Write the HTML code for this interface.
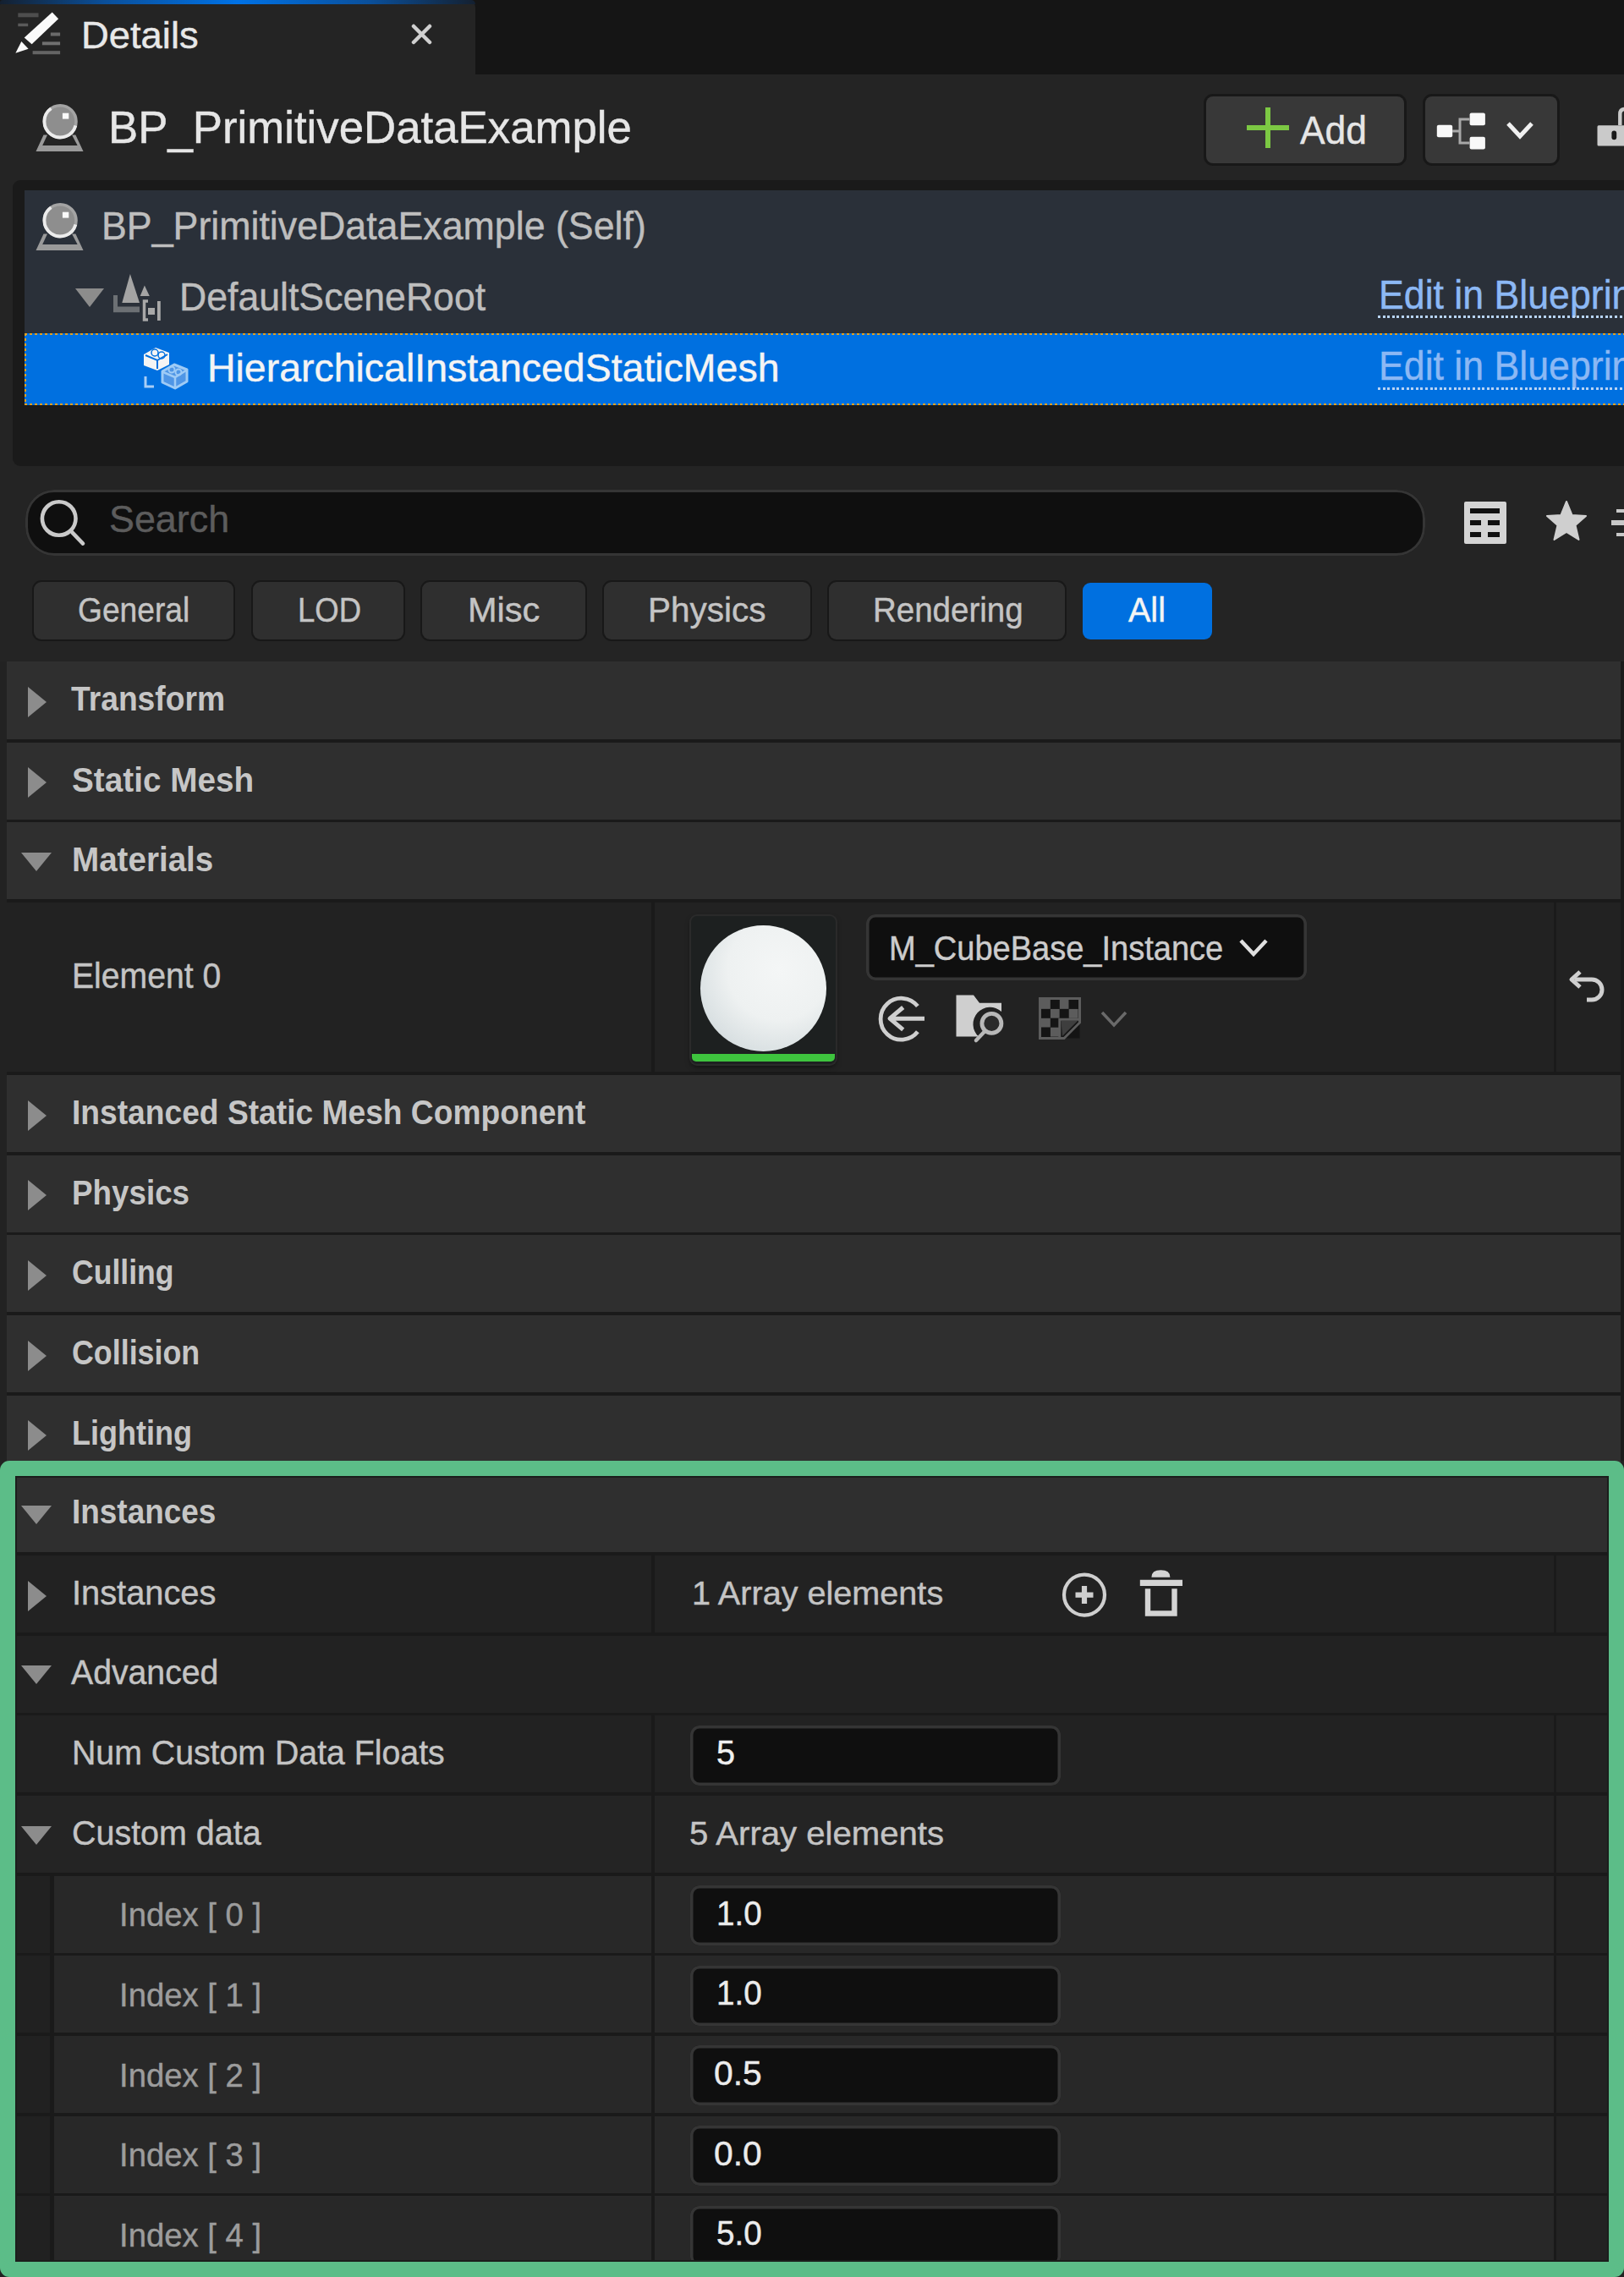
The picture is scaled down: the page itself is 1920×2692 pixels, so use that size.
<!DOCTYPE html>
<html><head><meta charset="utf-8"><style>
html,body{margin:0;padding:0;}
body{width:1920px;height:2692px;position:relative;overflow:hidden;background:#242424;font-family:"Liberation Sans",sans-serif;}
.t{position:absolute;white-space:pre;transform-origin:0 0;font-family:"Liberation Sans",sans-serif;-webkit-text-stroke:0.45px currentColor;}
</style></head><body>
<div style="position:absolute;left:0.00px;top:0.00px;width:1920.00px;height:88.00px;background:#151515;"></div>
<div style="position:absolute;left:0.00px;top:0.00px;width:561.50px;height:88.00px;background:#242424;border-top-right-radius:9px;border-top-left-radius:6px;"></div>
<div style="position:absolute;left:0.00px;top:0.00px;width:561.50px;height:4.50px;background:linear-gradient(90deg,#142030 0%,#0a4f9a 22%,#0072e6 50%,#0a4f9a 78%,#142030 100%);border-top-right-radius:9px;border-top-left-radius:6px;"></div>
<div class="t" style="left:95.80px;top:19.81px;font-size:44.93px;line-height:44.93px;color:#e8e8e8;transform:scaleX(1.0097);">Details</div>
<svg style="position:absolute;left:17.00px;top:13.00px" width="60.00" height="56.00" viewBox="0 0 60 56"><rect x="4.3" y="2.4" width="24.2" height="4.9" fill="#4e4e4e"/><rect x="4.3" y="14.7" width="11.9" height="3.5" fill="#5a5a5a"/>
<rect x="42.8" y="25.5" width="11.3" height="4" fill="#6a6a6a"/><rect x="32.9" y="36.4" width="21.2" height="3.9" fill="#707070"/><rect x="21.6" y="47.2" width="32.5" height="4" fill="#646464"/>
<path d="M44.7 1.4 L52.1 9.3 L20.6 39.3 L11.7 31.5 Z" fill="#fafafa"/><path d="M1.4 49.7 L8.3 35.9 L16.6 44.8 Z" fill="#fafafa"/></svg>
<svg style="position:absolute;left:486.00px;top:28.00px" width="25.00" height="25.00" viewBox="0 0 25 25"><path d="M3 3 L22 22 M22 3 L3 22" stroke="#d0d0d0" stroke-width="4.5" stroke-linecap="round"/></svg>
<div style="position:absolute;left:0.00px;top:88.00px;width:1920.00px;height:694.00px;background:#242424;"></div>
<svg style="position:absolute;left:40.00px;top:120.00px" width="62.00" height="62.00" viewBox="0 0 62 62"><path d="M2.5 59 L58.5 59 L49.4 39.5 L11.5 39.5 Z M10.2 52 L51.6 52 L45 39.5 L16 39.5 Z" fill="#9a9a9a" fill-rule="evenodd"/>
<circle cx="31.2" cy="23.6" r="18.8" fill="#8e8e8e" stroke="#a4a4a4" stroke-width="3.6"/>
<path d="M20.42 8.20 A18.8 18.8 0 1 0 49.36 28.47" stroke="#ececec" stroke-width="3.8" fill="none"/>
<rect x="33.9" y="13.7" width="7.4" height="6.9" fill="#fafafa"/></svg>
<div class="t" style="left:128.00px;top:123.80px;font-size:54.35px;line-height:54.35px;color:#e6e6e6;transform:scaleX(0.9712);">BP_PrimitiveDataExample</div>
<div style="position:absolute;left:1426.00px;top:113.50px;width:234.00px;height:79.00px;background:#383838;border-radius:8px;box-shadow:0 0 0 3px #181818;"></div>
<svg style="position:absolute;left:1474.00px;top:126.40px" width="50.00" height="50.00" viewBox="0 0 50 50"><path d="M25 1 V49 M0 25 H50" stroke="#7cc843" stroke-width="6"/></svg>
<div class="t" style="left:1537.00px;top:130.58px;font-size:46.38px;line-height:46.38px;color:#e6e6e6;transform:scaleX(0.9570);">Add</div>
<div style="position:absolute;left:1684.50px;top:113.50px;width:156.00px;height:79.00px;background:#383838;border-radius:8px;box-shadow:0 0 0 3px #181818;"></div>
<svg style="position:absolute;left:1698.00px;top:133.00px" width="62.00" height="46.00" viewBox="0 0 62 46"><rect x="0.8" y="14.7" width="18.4" height="14.6" rx="2" fill="#f8f8f8"/><rect x="39.6" y="0.5" width="18.3" height="14.7" rx="2" fill="#f8f8f8"/><rect x="39.6" y="28.8" width="18.3" height="14.7" rx="2" fill="#f8f8f8"/>
<path d="M19 22 H28 M39.6 8 H28 V36 H39.6" stroke="#a8a8a8" stroke-width="3" fill="none"/></svg>
<svg style="position:absolute;left:1779.00px;top:141.00px" width="38.00" height="28.00" viewBox="0 0 38 28"><path d="M4 5 L18 20 L32 5" stroke="#f0f0f0" stroke-width="5" fill="none"/></svg>
<svg style="position:absolute;left:1884.00px;top:125.00px" width="36.00" height="55.00" viewBox="0 0 36 55"><path d="M31.3 23 V10 Q31.3 4 37 4" stroke="#cacaca" stroke-width="4.4" fill="none"/><rect x="4.5" y="23.3" width="40" height="24.2" rx="1.5" fill="#cacaca"/><rect x="21.4" y="29.6" width="5.8" height="10.6" rx="2.9" fill="#1a1a1a"/></svg>
<div style="position:absolute;left:15.00px;top:212.50px;width:1925.00px;height:338.50px;background:#1a1a1a;border-radius:9px;"></div>
<div style="position:absolute;left:28.50px;top:224.50px;width:1891.50px;height:253.50px;background:#2a3039;"></div>
<svg style="position:absolute;left:40.00px;top:237.00px" width="62.00" height="62.00" viewBox="0 0 62 62"><path d="M2.5 59 L58.5 59 L49.4 39.5 L11.5 39.5 Z M10.2 52 L51.6 52 L45 39.5 L16 39.5 Z" fill="#9a9a9a" fill-rule="evenodd"/>
<circle cx="31.2" cy="23.6" r="18.8" fill="#8e8e8e" stroke="#a4a4a4" stroke-width="3.6"/>
<path d="M20.42 8.20 A18.8 18.8 0 1 0 49.36 28.47" stroke="#ececec" stroke-width="3.8" fill="none"/>
<rect x="33.9" y="13.7" width="7.4" height="6.9" fill="#fafafa"/></svg>
<div class="t" style="left:119.70px;top:244.18px;font-size:46.38px;line-height:46.38px;color:#bebebe;transform:scaleX(0.9645);">BP_PrimitiveDataExample (Self)</div>
<svg style="position:absolute;left:88.00px;top:340.00px" width="36.00" height="24.00" viewBox="0 0 36 24"><path d="M1 1 H35 L18 23 Z" fill="#8c8c8c"/></svg>
<svg style="position:absolute;left:130.00px;top:320.00px" width="64.00" height="64.00" viewBox="0 0 64 64"><path d="M23.9 4.1 L14.3 38.1 L35 38.1 Z" fill="#a4a4a4"/><path d="M40.9 17.4 L35.7 30 L46.8 30 Z" fill="#a4a4a4"/>
<path d="M4 29 H9 V42.6 H35 V49.2 H4 Z" fill="#6c7074"/>
<path d="M45 36 H40.5 V58 H45" stroke="#a8a8a8" stroke-width="3.5" fill="none"/><rect x="45" y="44" width="8" height="8" fill="#a8a8a8"/><rect x="56" y="36" width="3.8" height="23" fill="#a8a8a8"/></svg>
<div class="t" style="left:211.80px;top:327.58px;font-size:46.38px;line-height:46.38px;color:#bebebe;transform:scaleX(0.9621);">DefaultSceneRoot</div>
<div style="position:absolute;left:28.50px;top:393.50px;width:1891.50px;height:85.00px;background:#0070e0;"></div>
<div style="position:absolute;left:28.50px;top:393.50px;width:1891.50px;height:2.00px;background:repeating-linear-gradient(90deg,#e0a020 0 3px,transparent 3px 6px);"></div>
<div style="position:absolute;left:28.50px;top:476.50px;width:1891.50px;height:2.00px;background:repeating-linear-gradient(90deg,#e0a020 0 3px,transparent 3px 6px);"></div>
<div style="position:absolute;left:28.50px;top:393.50px;width:2.00px;height:85.00px;background:repeating-linear-gradient(180deg,#e0a020 0 3px,transparent 3px 6px);"></div>
<svg style="position:absolute;left:166.00px;top:405.00px" width="58.00" height="58.00" viewBox="0 0 58 58"><path d="M4 14 L18 6 L34 12 L34 26 L20 33 L4 27 Z" fill="#f4f4f4"/><path d="M6 15 L20 21 L32 14" stroke="#0070e0" stroke-width="2" fill="none"/><path d="M20 21 V31" stroke="#0070e0" stroke-width="2"/>
<circle cx="17" cy="12" r="4" fill="none" stroke="#0070e0" stroke-width="1.5"/><circle cx="25" cy="15" r="4" fill="none" stroke="#0070e0" stroke-width="1.5"/>
<path d="M26 34 L40 26 L55 32 L55 46 L41 54 L26 47 Z" fill="#4f96e6" stroke="#9ecbf6" stroke-width="3" stroke-linejoin="round"/><path d="M27 35 L41 41 L54 33 M41 41 V53" stroke="#9ecbf6" stroke-width="2.5" fill="none"/><circle cx="37" cy="32" r="3.5" fill="none" stroke="#9ecbf6" stroke-width="2"/><circle cx="45" cy="35" r="3.5" fill="none" stroke="#9ecbf6" stroke-width="2"/>
<path d="M6 40 V52 H16" stroke="#a8cdf6" stroke-width="3" fill="none"/></svg>
<div class="t" style="left:245.00px;top:411.58px;font-size:46.38px;line-height:46.38px;color:#f4f4f4;transform:scaleX(1.0017);">HierarchicalInstancedStaticMesh</div>
<div class="t" style="left:1629.50px;top:323.73px;font-size:48.55px;line-height:48.55px;color:#8cb8f4;transform:scaleX(0.9200);">Edit in Blueprint</div>
<div style="position:absolute;left:1629.00px;top:373.00px;width:291.00px;height:3.00px;background:repeating-linear-gradient(90deg,#b8d4f4 0 3px,transparent 3px 5.6px);"></div>
<div class="t" style="left:1629.50px;top:408.23px;font-size:48.55px;line-height:48.55px;color:#8cb8f4;transform:scaleX(0.9200);">Edit in Blueprint</div>
<div style="position:absolute;left:1629.00px;top:457.50px;width:291.00px;height:3.00px;background:repeating-linear-gradient(90deg,#b8d4f4 0 3px,transparent 3px 5.6px);"></div>
<div style="position:absolute;left:30.00px;top:579.00px;width:1655.00px;height:78.00px;background:#0f0f0f;border-radius:34px;box-shadow:inset 0 0 0 3px #353535;"></div>
<svg style="position:absolute;left:46.00px;top:588.00px" width="60.00" height="60.00" viewBox="0 0 60 60"><circle cx="23.7" cy="25" r="19.8" stroke="#cacaca" stroke-width="4.6" fill="none"/><path d="M39.3 41.3 L52 54.6" stroke="#cacaca" stroke-width="4.6" stroke-linecap="round"/></svg>
<div class="t" style="left:128.50px;top:592.41px;font-size:44.93px;line-height:44.93px;color:#5c5c5c;transform:scaleX(0.9985);">Search</div>
<svg style="position:absolute;left:1730.00px;top:592.00px" width="52.00" height="52.00" viewBox="0 0 52 52"><rect x="1" y="1" width="50" height="50" rx="2" fill="#d4d4d4"/><rect x="8" y="9" width="35" height="6" fill="#111"/>
<rect x="8" y="23" width="13" height="6" fill="#111"/><rect x="29" y="23" width="14" height="6" fill="#111"/><rect x="8" y="37" width="13" height="6" fill="#111"/><rect x="29" y="37" width="14" height="6" fill="#111"/></svg>
<svg style="position:absolute;left:1827.00px;top:592.00px" width="50.00" height="50.00" viewBox="0 0 50 50"><path d="M25 1 L31.5 17 L48 18 L35.5 29 L39.5 46 L25 37 L10.5 46 L14.5 29 L2 18 L18.5 17 Z" fill="#cfcfcf" stroke="#cfcfcf" stroke-width="2" stroke-linejoin="round"/></svg>
<svg style="position:absolute;left:1905.00px;top:598.00px" width="15.00" height="40.00" viewBox="0 0 15 40"><rect x="6" y="4" width="9" height="4" fill="#c8c8c8"/><rect x="0" y="17" width="15" height="6" fill="#c8c8c8"/><rect x="6" y="32" width="9" height="4" fill="#c8c8c8"/></svg>
<div style="position:absolute;left:39.70px;top:688.00px;width:236.30px;height:67.50px;background:#2f2f2f;border-radius:9px;box-shadow:0 0 0 2px #181818;"></div>
<div class="t" style="left:91.80px;top:701.39px;font-size:41.30px;line-height:41.30px;color:#c4c4c4;transform:scaleX(0.8997);">General</div>
<div style="position:absolute;left:298.80px;top:688.00px;width:178.20px;height:67.50px;background:#2f2f2f;border-radius:9px;box-shadow:0 0 0 2px #181818;"></div>
<div class="t" style="left:352.00px;top:701.39px;font-size:41.30px;line-height:41.30px;color:#c4c4c4;transform:scaleX(0.8836);">LOD</div>
<div style="position:absolute;left:498.70px;top:688.00px;width:193.80px;height:67.50px;background:#2f2f2f;border-radius:9px;box-shadow:0 0 0 2px #181818;"></div>
<div class="t" style="left:552.60px;top:701.39px;font-size:41.30px;line-height:41.30px;color:#c4c4c4;transform:scaleX(1.0061);">Misc</div>
<div style="position:absolute;left:713.70px;top:688.00px;width:244.00px;height:67.50px;background:#2f2f2f;border-radius:9px;box-shadow:0 0 0 2px #181818;"></div>
<div class="t" style="left:766.00px;top:701.39px;font-size:41.30px;line-height:41.30px;color:#c4c4c4;transform:scaleX(0.9804);">Physics</div>
<div style="position:absolute;left:980.40px;top:688.00px;width:279.10px;height:67.50px;background:#2f2f2f;border-radius:9px;box-shadow:0 0 0 2px #181818;"></div>
<div class="t" style="left:1032.00px;top:701.39px;font-size:41.30px;line-height:41.30px;color:#c4c4c4;transform:scaleX(0.9322);">Rendering</div>
<div style="position:absolute;left:1280.30px;top:688.70px;width:153.00px;height:66.90px;background:#0070e0;border-radius:9px;"></div>
<div class="t" style="left:1334.00px;top:701.39px;font-size:41.30px;line-height:41.30px;color:#f4f4f4;transform:scaleX(0.9575);">All</div>
<div style="position:absolute;left:0.00px;top:782.00px;width:1920.00px;height:1910.00px;background:#222222;"></div>
<div style="position:absolute;left:8.00px;top:782.00px;width:1908.00px;height:92.10px;background:#2f2f2f;"></div>
<svg style="position:absolute;left:32.00px;top:810.50px" width="24.00" height="38.00" viewBox="0 0 24 38"><path d="M1 1 L23 19 L1 37 Z" fill="#8c8c8c"/></svg>
<div class="t" style="left:83.90px;top:806.14px;font-size:41.01px;line-height:41.01px;color:#c6c6c6;transform:scaleX(0.9080);font-weight:700;-webkit-text-stroke:0;">Transform</div>
<div style="position:absolute;left:8.00px;top:874.10px;width:1908.00px;height:3.70px;background:#1a1a1a;"></div>
<div style="position:absolute;left:8.00px;top:877.80px;width:1908.00px;height:90.80px;background:#2f2f2f;"></div>
<svg style="position:absolute;left:32.00px;top:906.30px" width="24.00" height="38.00" viewBox="0 0 24 38"><path d="M1 1 L23 19 L1 37 Z" fill="#8c8c8c"/></svg>
<div class="t" style="left:84.90px;top:901.94px;font-size:41.01px;line-height:41.01px;color:#c6c6c6;transform:scaleX(0.9446);font-weight:700;-webkit-text-stroke:0;">Static Mesh</div>
<div style="position:absolute;left:8.00px;top:968.60px;width:1908.00px;height:3.70px;background:#1a1a1a;"></div>
<div style="position:absolute;left:8.00px;top:972.30px;width:1908.00px;height:90.80px;background:#2f2f2f;"></div>
<svg style="position:absolute;left:24.00px;top:1007.00px" width="38.00" height="24.00" viewBox="0 0 38 24"><path d="M1 1 H37 L19 23 Z" fill="#8c8c8c"/></svg>
<div class="t" style="left:84.90px;top:996.44px;font-size:41.01px;line-height:41.01px;color:#c6c6c6;transform:scaleX(0.9410);font-weight:700;-webkit-text-stroke:0;">Materials</div>
<div style="position:absolute;left:8.00px;top:1267.30px;width:1908.00px;height:3.70px;background:#1a1a1a;"></div>
<div style="position:absolute;left:8.00px;top:1271.00px;width:1908.00px;height:90.97px;background:#2f2f2f;"></div>
<svg style="position:absolute;left:32.00px;top:1299.50px" width="24.00" height="38.00" viewBox="0 0 24 38"><path d="M1 1 L23 19 L1 37 Z" fill="#8c8c8c"/></svg>
<div class="t" style="left:84.90px;top:1295.14px;font-size:41.01px;line-height:41.01px;color:#c6c6c6;transform:scaleX(0.9069);font-weight:700;-webkit-text-stroke:0;">Instanced Static Mesh Component</div>
<div style="position:absolute;left:8.00px;top:1361.97px;width:1908.00px;height:3.70px;background:#1a1a1a;"></div>
<div style="position:absolute;left:8.00px;top:1365.67px;width:1908.00px;height:90.97px;background:#2f2f2f;"></div>
<svg style="position:absolute;left:32.00px;top:1394.17px" width="24.00" height="38.00" viewBox="0 0 24 38"><path d="M1 1 L23 19 L1 37 Z" fill="#8c8c8c"/></svg>
<div class="t" style="left:84.90px;top:1389.80px;font-size:41.01px;line-height:41.01px;color:#c6c6c6;transform:scaleX(0.8972);font-weight:700;-webkit-text-stroke:0;">Physics</div>
<div style="position:absolute;left:8.00px;top:1456.63px;width:1908.00px;height:3.70px;background:#1a1a1a;"></div>
<div style="position:absolute;left:8.00px;top:1460.33px;width:1908.00px;height:90.97px;background:#2f2f2f;"></div>
<svg style="position:absolute;left:32.00px;top:1488.83px" width="24.00" height="38.00" viewBox="0 0 24 38"><path d="M1 1 L23 19 L1 37 Z" fill="#8c8c8c"/></svg>
<div class="t" style="left:84.90px;top:1484.47px;font-size:41.01px;line-height:41.01px;color:#c6c6c6;transform:scaleX(0.8673);font-weight:700;-webkit-text-stroke:0;">Culling</div>
<div style="position:absolute;left:8.00px;top:1551.30px;width:1908.00px;height:3.70px;background:#1a1a1a;"></div>
<div style="position:absolute;left:8.00px;top:1555.00px;width:1908.00px;height:90.97px;background:#2f2f2f;"></div>
<svg style="position:absolute;left:32.00px;top:1583.50px" width="24.00" height="38.00" viewBox="0 0 24 38"><path d="M1 1 L23 19 L1 37 Z" fill="#8c8c8c"/></svg>
<div class="t" style="left:85.20px;top:1579.14px;font-size:41.01px;line-height:41.01px;color:#c6c6c6;transform:scaleX(0.8736);font-weight:700;-webkit-text-stroke:0;">Collision</div>
<div style="position:absolute;left:8.00px;top:1645.97px;width:1908.00px;height:3.70px;background:#1a1a1a;"></div>
<div style="position:absolute;left:8.00px;top:1649.67px;width:1908.00px;height:90.97px;background:#2f2f2f;"></div>
<svg style="position:absolute;left:32.00px;top:1678.17px" width="24.00" height="38.00" viewBox="0 0 24 38"><path d="M1 1 L23 19 L1 37 Z" fill="#8c8c8c"/></svg>
<div class="t" style="left:85.20px;top:1673.81px;font-size:41.01px;line-height:41.01px;color:#c6c6c6;transform:scaleX(0.8788);font-weight:700;-webkit-text-stroke:0;">Lighting</div>
<div style="position:absolute;left:8.00px;top:1063.10px;width:1908.00px;height:3.70px;background:#1a1a1a;"></div>
<div style="position:absolute;left:0.00px;top:1066.80px;width:1916.00px;height:200.50px;background:#222222;"></div>
<div style="position:absolute;left:770.00px;top:1066.80px;width:3.50px;height:200.50px;background:#1a1a1a;"></div>
<div style="position:absolute;left:1836.50px;top:1066.80px;width:3.50px;height:200.50px;background:#1a1a1a;"></div>
<div class="t" style="left:84.70px;top:1133.08px;font-size:42.03px;line-height:42.03px;color:#c4c4c4;transform:scaleX(0.9316);">Element 0</div>
<div style="position:absolute;left:816.50px;top:1082.50px;width:171.50px;height:175.50px;background:#1d2020;border-radius:7px;box-shadow:0 0 0 2px #2a2a2a, 0 3px 6px rgba(0,0,0,.6);"></div>
<div style="position:absolute;left:828px;top:1094px;width:149px;height:149px;border-radius:50%;background:radial-gradient(circle at 62% 35%,#f4f6f6 0%,#eef1f1 45%,#d9e0e2 75%,#aeb9bd 100%);"></div>
<div style="position:absolute;left:818.00px;top:1246.00px;width:169.00px;height:8.50px;background:#3ec43e;border-radius:0 0 5px 5px;"></div>
<div style="position:absolute;left:1024.00px;top:1081.00px;width:521.00px;height:78.20px;background:#0f0f0f;border-radius:11px;box-shadow:inset 0 0 0 3.6px #353535;"></div>
<div class="t" style="left:1050.70px;top:1102.12px;font-size:39.86px;line-height:39.86px;color:#cccccc;transform:scaleX(0.9537);">M_CubeBase_Instance</div>
<svg style="position:absolute;left:1463.00px;top:1108.00px" width="38.00" height="26.00" viewBox="0 0 38 26"><path d="M4 4 L19 20 L34 4" stroke="#e0e0e0" stroke-width="4.5" fill="none"/></svg>
<svg style="position:absolute;left:1038.00px;top:1176.00px" width="60.00" height="58.00" viewBox="0 0 60 58"><path d="M46.9 13.6 A24.5 24.5 0 1 0 46.9 43.8" stroke="#cfcfcf" stroke-width="4.8" fill="none"/><path d="M55 28.2 H15 M29.7 15 L14 28.2 L29.7 41.4" stroke="#cfcfcf" stroke-width="5" fill="none" stroke-linejoin="round"/></svg>
<svg style="position:absolute;left:1128.00px;top:1174.00px" width="62.00" height="60.00" viewBox="0 0 62 60"><path d="M2.5 2.4 H23 L30 11.8 H56 V22 A18 18 0 0 0 29 51.6 H2.5 Z" fill="#cfcfcf"/><circle cx="44.4" cy="35.9" r="11.5" stroke="#b8b8b8" stroke-width="4.8" fill="#2a2a2a"/><path d="M36.5 45 L26 56" stroke="#b8b8b8" stroke-width="4.5" stroke-linecap="round"/></svg>
<svg style="position:absolute;left:1228.00px;top:1179.00px" width="52.00" height="52.00" viewBox="0 0 52 52"><rect x="1.5" y="1.5" width="47" height="47" fill="#141414"/><rect x="3.0" y="3.0" width="10.9" height="10.9" fill="#5c5c5c"/><rect x="13.9" y="3.0" width="10.9" height="10.9" fill="#141414"/><rect x="24.8" y="3.0" width="10.9" height="10.9" fill="#5c5c5c"/><rect x="35.7" y="3.0" width="10.9" height="10.9" fill="#141414"/><rect x="3.0" y="13.9" width="10.9" height="10.9" fill="#141414"/><rect x="13.9" y="13.9" width="10.9" height="10.9" fill="#5c5c5c"/><rect x="24.8" y="13.9" width="10.9" height="10.9" fill="#141414"/><rect x="35.7" y="13.9" width="10.9" height="10.9" fill="#5c5c5c"/><rect x="3.0" y="24.8" width="10.9" height="10.9" fill="#5c5c5c"/><rect x="13.9" y="24.8" width="10.9" height="10.9" fill="#141414"/><rect x="3.0" y="35.7" width="10.9" height="10.9" fill="#141414"/><rect x="13.9" y="35.7" width="10.9" height="10.9" fill="#5c5c5c"/><path d="M1.5 1.5 H48.5 V30 L30 48.5 H1.5 Z" stroke="#5c5c5c" stroke-width="3" fill="none"/><path d="M24.8 48.5 V26.3 H48.5" stroke="#5c5c5c" stroke-width="3" fill="none"/><path d="M26.5 28 H46 L28 46 Z" fill="#3e3e3e"/></svg>
<svg style="position:absolute;left:1300.00px;top:1194.00px" width="34.00" height="22.00" viewBox="0 0 34 22"><path d="M3 3 L17 18 L31 3" stroke="#6a6a6a" stroke-width="3.5" fill="none"/></svg>
<svg style="position:absolute;left:1852.00px;top:1146.00px" width="46.00" height="40.00" viewBox="0 0 46 40"><path d="M10 12 H30 A12 12 0 0 1 30 36 H24" stroke="#cfcfcf" stroke-width="5" fill="none"/><path d="M16 3 L6 12 L16 21" stroke="#cfcfcf" stroke-width="5" fill="none" stroke-linejoin="round"/></svg>
<div style="position:absolute;left:18.50px;top:1744.34px;width:1883.50px;height:90.97px;background:#2f2f2f;"></div>
<svg style="position:absolute;left:24.00px;top:1779.04px" width="38.00" height="24.00" viewBox="0 0 38 24"><path d="M1 1 H37 L19 23 Z" fill="#8c8c8c"/></svg>
<div class="t" style="left:85.20px;top:1767.47px;font-size:41.01px;line-height:41.01px;color:#c6c6c6;transform:scaleX(0.9007);font-weight:700;-webkit-text-stroke:0;">Instances</div>
<div style="position:absolute;left:18.50px;top:1835.30px;width:1883.50px;height:3.70px;background:#1a1a1a;"></div>
<div style="position:absolute;left:18.50px;top:1839.00px;width:1883.50px;height:90.97px;background:#222222;"></div>
<div style="position:absolute;left:770.00px;top:1839.00px;width:3.50px;height:90.97px;background:#1a1a1a;"></div>
<div style="position:absolute;left:1836.50px;top:1839.00px;width:3.50px;height:90.97px;background:#1a1a1a;"></div>
<svg style="position:absolute;left:32.00px;top:1867.50px" width="24.00" height="38.00" viewBox="0 0 24 38"><path d="M1 1 L23 19 L1 37 Z" fill="#8c8c8c"/></svg>
<div class="t" style="left:85.20px;top:1862.51px;font-size:40.58px;line-height:40.58px;color:#c4c4c4;transform:scaleX(0.9811);">Instances</div>
<div class="t" style="left:817.60px;top:1864.04px;font-size:39.13px;line-height:39.13px;color:#c4c4c4;transform:scaleX(1.0123);">1 Array elements</div>
<svg style="position:absolute;left:1254.00px;top:1857.00px" width="56.00" height="58.00" viewBox="0 0 56 58"><circle cx="28" cy="28.6" r="24" stroke="#cfcfcf" stroke-width="4.2" fill="none"/><path d="M28 18 V39 M17.5 28.6 H38.5" stroke="#cfcfcf" stroke-width="6.2"/></svg>
<svg style="position:absolute;left:1346.00px;top:1854.00px" width="56.00" height="60.00" viewBox="0 0 56 60"><path d="M15.4 10.7 Q15.4 2.3 26.4 2.3 Q37.4 2.3 37.4 10.7 Z" fill="#d4d4d4"/><path d="M1.8 17.4 H52" stroke="#d4d4d4" stroke-width="7.2"/><path d="M11 24.3 V53.5 H42.5 V24.3" stroke="#d4d4d4" stroke-width="6.4" fill="none"/></svg>
<div style="position:absolute;left:18.50px;top:1929.97px;width:1883.50px;height:3.70px;background:#1a1a1a;"></div>
<div style="position:absolute;left:18.50px;top:1933.67px;width:1883.50px;height:90.97px;background:#222222;"></div>
<svg style="position:absolute;left:24.00px;top:1968.37px" width="38.00" height="24.00" viewBox="0 0 38 24"><path d="M1 1 H37 L19 23 Z" fill="#8c8c8c"/></svg>
<div class="t" style="left:83.60px;top:1957.18px;font-size:40.58px;line-height:40.58px;color:#c4c4c4;transform:scaleX(0.9663);">Advanced</div>
<div style="position:absolute;left:18.50px;top:2024.64px;width:1883.50px;height:3.70px;background:#1a1a1a;"></div>
<div style="position:absolute;left:18.50px;top:2028.34px;width:1883.50px;height:90.97px;background:#222222;"></div>
<div style="position:absolute;left:770.00px;top:2028.34px;width:3.50px;height:90.97px;background:#1a1a1a;"></div>
<div style="position:absolute;left:1836.50px;top:2028.34px;width:3.50px;height:90.97px;background:#1a1a1a;"></div>
<div class="t" style="left:85.20px;top:2051.84px;font-size:40.58px;line-height:40.58px;color:#c4c4c4;transform:scaleX(0.9675);">Num Custom Data Floats</div>
<div style="position:absolute;left:816.00px;top:2040.00px;width:438.00px;height:70.50px;background:#0f0f0f;border-radius:11px;box-shadow:inset 0 0 0 3.5px #353535;"></div>
<div class="t" style="left:847.00px;top:2053.12px;font-size:39.86px;line-height:39.86px;color:#f0f0f0;transform:scaleX(0.9946);">5</div>
<div style="position:absolute;left:18.50px;top:2119.30px;width:1883.50px;height:3.70px;background:#1a1a1a;"></div>
<div style="position:absolute;left:18.50px;top:2123.00px;width:1883.50px;height:90.97px;background:#242424;"></div>
<div style="position:absolute;left:770.00px;top:2123.00px;width:3.50px;height:90.97px;background:#1a1a1a;"></div>
<div style="position:absolute;left:1836.50px;top:2123.00px;width:3.50px;height:90.97px;background:#1a1a1a;"></div>
<svg style="position:absolute;left:24.00px;top:2157.70px" width="38.00" height="24.00" viewBox="0 0 38 24"><path d="M1 1 H37 L19 23 Z" fill="#8c8c8c"/></svg>
<div class="t" style="left:85.20px;top:2146.51px;font-size:40.58px;line-height:40.58px;color:#c4c4c4;transform:scaleX(0.9718);">Custom data</div>
<div class="t" style="left:814.80px;top:2148.24px;font-size:39.13px;line-height:39.13px;color:#c4c4c4;transform:scaleX(1.0256);">5 Array elements</div>
<div style="position:absolute;left:18.50px;top:2213.97px;width:1883.50px;height:3.70px;background:#1a1a1a;"></div>
<div style="position:absolute;left:18.50px;top:2217.67px;width:40.50px;height:90.97px;background:#212121;"></div>
<div style="position:absolute;left:59.00px;top:2217.67px;width:4.50px;height:90.97px;background:#1a1a1a;"></div>
<div style="position:absolute;left:63.50px;top:2217.67px;width:1838.50px;height:90.97px;background:#282828;"></div>
<div style="position:absolute;left:770.00px;top:2217.67px;width:3.50px;height:90.97px;background:#1a1a1a;"></div>
<div style="position:absolute;left:1836.50px;top:2217.67px;width:3.50px;height:90.97px;background:#1a1a1a;"></div>
<div style="position:absolute;left:1840.00px;top:2217.67px;width:62.00px;height:90.97px;background:#232323;"></div>
<div class="t" style="left:140.90px;top:2244.41px;font-size:39.13px;line-height:39.13px;color:#9c9c9c;transform:scaleX(0.9780);">Index [ 0 ]</div>
<div style="position:absolute;left:816.00px;top:2228.97px;width:438.00px;height:71.00px;background:#0f0f0f;border-radius:11px;box-shadow:inset 0 0 0 3.5px #353535;"></div>
<div class="t" style="left:847.00px;top:2242.79px;font-size:39.86px;line-height:39.86px;color:#ececec;transform:scaleX(0.9693);">1.0</div>
<div style="position:absolute;left:18.50px;top:2308.64px;width:1883.50px;height:3.70px;background:#1a1a1a;"></div>
<div style="position:absolute;left:18.50px;top:2312.34px;width:40.50px;height:90.97px;background:#212121;"></div>
<div style="position:absolute;left:59.00px;top:2312.34px;width:4.50px;height:90.97px;background:#1a1a1a;"></div>
<div style="position:absolute;left:63.50px;top:2312.34px;width:1838.50px;height:90.97px;background:#282828;"></div>
<div style="position:absolute;left:770.00px;top:2312.34px;width:3.50px;height:90.97px;background:#1a1a1a;"></div>
<div style="position:absolute;left:1836.50px;top:2312.34px;width:3.50px;height:90.97px;background:#1a1a1a;"></div>
<div style="position:absolute;left:1840.00px;top:2312.34px;width:62.00px;height:90.97px;background:#232323;"></div>
<div class="t" style="left:140.90px;top:2339.08px;font-size:39.13px;line-height:39.13px;color:#9c9c9c;transform:scaleX(0.9780);">Index [ 1 ]</div>
<div style="position:absolute;left:816.00px;top:2323.64px;width:438.00px;height:71.00px;background:#0f0f0f;border-radius:11px;box-shadow:inset 0 0 0 3.5px #353535;"></div>
<div class="t" style="left:847.00px;top:2337.46px;font-size:39.86px;line-height:39.86px;color:#ececec;transform:scaleX(0.9693);">1.0</div>
<div style="position:absolute;left:18.50px;top:2403.30px;width:1883.50px;height:3.70px;background:#1a1a1a;"></div>
<div style="position:absolute;left:18.50px;top:2407.00px;width:40.50px;height:90.97px;background:#212121;"></div>
<div style="position:absolute;left:59.00px;top:2407.00px;width:4.50px;height:90.97px;background:#1a1a1a;"></div>
<div style="position:absolute;left:63.50px;top:2407.00px;width:1838.50px;height:90.97px;background:#282828;"></div>
<div style="position:absolute;left:770.00px;top:2407.00px;width:3.50px;height:90.97px;background:#1a1a1a;"></div>
<div style="position:absolute;left:1836.50px;top:2407.00px;width:3.50px;height:90.97px;background:#1a1a1a;"></div>
<div style="position:absolute;left:1840.00px;top:2407.00px;width:62.00px;height:90.97px;background:#232323;"></div>
<div class="t" style="left:140.90px;top:2433.74px;font-size:39.13px;line-height:39.13px;color:#9c9c9c;transform:scaleX(0.9780);">Index [ 2 ]</div>
<div style="position:absolute;left:816.00px;top:2418.30px;width:438.00px;height:71.00px;background:#0f0f0f;border-radius:11px;box-shadow:inset 0 0 0 3.5px #353535;"></div>
<div class="t" style="left:844.00px;top:2432.13px;font-size:39.86px;line-height:39.86px;color:#ececec;transform:scaleX(1.0235);">0.5</div>
<div style="position:absolute;left:18.50px;top:2497.97px;width:1883.50px;height:3.70px;background:#1a1a1a;"></div>
<div style="position:absolute;left:18.50px;top:2501.67px;width:40.50px;height:90.97px;background:#212121;"></div>
<div style="position:absolute;left:59.00px;top:2501.67px;width:4.50px;height:90.97px;background:#1a1a1a;"></div>
<div style="position:absolute;left:63.50px;top:2501.67px;width:1838.50px;height:90.97px;background:#282828;"></div>
<div style="position:absolute;left:770.00px;top:2501.67px;width:3.50px;height:90.97px;background:#1a1a1a;"></div>
<div style="position:absolute;left:1836.50px;top:2501.67px;width:3.50px;height:90.97px;background:#1a1a1a;"></div>
<div style="position:absolute;left:1840.00px;top:2501.67px;width:62.00px;height:90.97px;background:#232323;"></div>
<div class="t" style="left:140.90px;top:2528.41px;font-size:39.13px;line-height:39.13px;color:#9c9c9c;transform:scaleX(0.9780);">Index [ 3 ]</div>
<div style="position:absolute;left:816.00px;top:2512.97px;width:438.00px;height:71.00px;background:#0f0f0f;border-radius:11px;box-shadow:inset 0 0 0 3.5px #353535;"></div>
<div class="t" style="left:844.00px;top:2526.79px;font-size:39.86px;line-height:39.86px;color:#ececec;transform:scaleX(1.0235);">0.0</div>
<div style="position:absolute;left:18.50px;top:2592.64px;width:1883.50px;height:3.70px;background:#1a1a1a;"></div>
<div style="position:absolute;left:18.50px;top:2596.34px;width:40.50px;height:95.66px;background:#212121;"></div>
<div style="position:absolute;left:59.00px;top:2596.34px;width:4.50px;height:95.66px;background:#1a1a1a;"></div>
<div style="position:absolute;left:63.50px;top:2596.34px;width:1838.50px;height:95.66px;background:#282828;"></div>
<div style="position:absolute;left:770.00px;top:2596.34px;width:3.50px;height:95.66px;background:#1a1a1a;"></div>
<div style="position:absolute;left:1836.50px;top:2596.34px;width:3.50px;height:95.66px;background:#1a1a1a;"></div>
<div style="position:absolute;left:1840.00px;top:2596.34px;width:62.00px;height:95.66px;background:#232323;"></div>
<div class="t" style="left:140.90px;top:2623.08px;font-size:39.13px;line-height:39.13px;color:#9c9c9c;transform:scaleX(0.9780);">Index [ 4 ]</div>
<div style="position:absolute;left:816.00px;top:2607.64px;width:438.00px;height:71.00px;background:#0f0f0f;border-radius:11px;box-shadow:inset 0 0 0 3.5px #353535;"></div>
<div class="t" style="left:847.00px;top:2621.46px;font-size:39.86px;line-height:39.86px;color:#ececec;transform:scaleX(0.9693);">5.0</div>
<div style="position:absolute;left:0;top:1726.8px;width:1920px;height:965.2px;box-sizing:border-box;border:18.3px solid #5cbd88;border-radius:11px;box-shadow:inset 0 0 0 2px #1b1e1c;"></div>
<div style="position:absolute;left:1916.00px;top:782.00px;width:4.00px;height:944.80px;background:#1a1a1a;"></div>
</body></html>
